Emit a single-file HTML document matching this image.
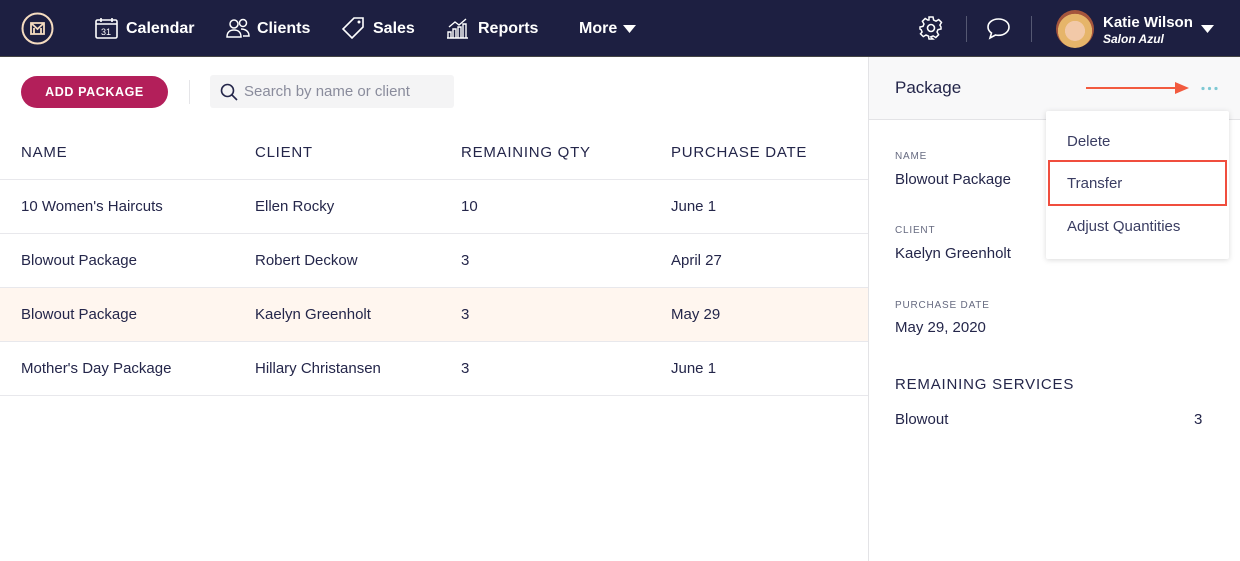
<!DOCTYPE html>
<html><head><meta charset="utf-8"><style>
*{margin:0;padding:0;box-sizing:border-box}
body{width:1240px;height:561px;overflow:hidden;background:#fff;font-family:"Liberation Sans",sans-serif;color:#24264a;position:relative}
.nav{position:absolute;left:0;top:0;width:1240px;height:57px;background:#1d1f41;border-bottom:1px solid #444}
.nav .it{position:absolute;top:20px;color:#fff;font-size:16px;font-weight:bold}
.nav svg{position:absolute}
.abs{position:absolute}
.th{position:absolute;top:144px;font-size:15px;letter-spacing:.75px;color:#24264a}
.row{position:absolute;left:0;width:868px;height:54px;border-top:1px solid #e8e8ec}
.row span{position:absolute;top:18px;font-size:15px}
.lbl{position:absolute;left:895px;font-size:10px;letter-spacing:.8px;color:#666a80}
.val{position:absolute;left:895px;font-size:15px}
</style></head><body>
<div class="nav">
<svg style="left:21px;top:12px" width="33" height="33" viewBox="0 0 33 33"><circle cx="16.5" cy="16.5" r="15" fill="none" stroke="#f5dcc0" stroke-width="2"/><path d="M10 11h13v11H10z M10 11l6.5 6 6.5-6 M13 22v-6 M20 22v-6" fill="none" stroke="#f5dcc0" stroke-width="1.8"/></svg>
<svg style="left:95px;top:18px" width="23" height="21" viewBox="0 0 23 21"><rect x="1" y="2" width="21" height="18" rx="1.5" fill="none" stroke="#fff" stroke-width="1.6"/><path d="M1 6h21M6 0v4M17 0v4" stroke="#fff" stroke-width="1.6"/><text x="6" y="17" font-size="9" fill="#fff" font-family="Liberation Sans">31</text></svg>
<div class="it" style="left:126px">Calendar</div>
<svg style="left:226px;top:18px" width="24" height="20" viewBox="0 0 24 20"><circle cx="8" cy="6" r="4" fill="none" stroke="#fff" stroke-width="1.5"/><circle cx="17" cy="5" r="3.5" fill="none" stroke="#fff" stroke-width="1.5"/><path d="M1 19c0-5 3-7 7-7s7 2 7 7z M15 11c4 0 8 2 8 7h-6" fill="none" stroke="#fff" stroke-width="1.5"/></svg>
<div class="it" style="left:257px">Clients</div>
<svg style="left:341px;top:17px" width="24" height="22" viewBox="0 0 24 22"><path d="M13 1h9v9L11 21 2 12z" fill="none" stroke="#fff" stroke-width="1.6"/><circle cx="18" cy="5" r="1.5" fill="#fff"/></svg>
<div class="it" style="left:373px">Sales</div>
<svg style="left:446px;top:17px" width="23" height="22" viewBox="0 0 23 22"><path d="M2 21v-6h3v6M7 21v-9h3v9M12 21v-11h3v11M17 21v-14h3v14M1 21h21M3 10l6-5 4 3 7-6" fill="none" stroke="#fff" stroke-width="1.4"/></svg>
<div class="it" style="left:478px">Reports</div>
<div class="it" style="left:579px">More</div>
<svg style="left:623px;top:25px" width="13" height="8"><path d="M0 0h13L6.5 8z" fill="#fff"/></svg>
<svg style="left:919px;top:16px" width="24" height="24" viewBox="0 0 24 24"><circle cx="12" cy="12" r="3.5" fill="none" stroke="#fff" stroke-width="1.6"/><path d="M10 1h4l.6 3 2.4 1.2 2.7-1.6 2.8 2.8-1.6 2.7L22 11v2l-3 .6-1 2.4 1.6 2.7-2.8 2.8-2.7-1.6-2.4 1L14 23h-4l-.6-3-2.4-1-2.7 1.6-2.8-2.8L3.1 16l-1-2.4L1 13v-2l3-.6 1-2.4-1.6-2.7 2.8-2.8L8.9 4.1 10 4z" fill="none" stroke="#fff" stroke-width="1.5"/></svg>
<div class="abs" style="left:966px;top:16px;width:1px;height:26px;background:#555872"></div>
<svg style="left:986px;top:17px" width="25" height="23" viewBox="0 0 25 23"><path d="M12.5 2C6.5 2 2 5.5 2 10c0 2.5 1.3 4.5 3.5 6L4 21l5.5-3c1 .2 2 .3 3 .3 6 0 10.5-3.7 10.5-8.3S18.5 2 12.5 2z" fill="none" stroke="#fff" stroke-width="1.6"/></svg>
<div class="abs" style="left:1031px;top:16px;width:1px;height:26px;background:#555872"></div>
<div class="abs" style="left:1056px;top:10px;width:38px;height:38px;border-radius:50%;background:radial-gradient(circle at 50% 55%,#f2c9a8 0 35%,#e6b56a 36% 60%,#a5553c 61%)"></div>
<div class="it" style="left:1103px;top:14px;font-size:15px">Katie Wilson</div>
<div class="abs" style="left:1103px;top:32px;color:#fff;font-size:12px;font-style:italic;font-weight:bold">Salon Azul</div>
<svg style="left:1201px;top:25px" width="13" height="8"><path d="M0 0h13L6.5 8z" fill="#fff"/></svg>
</div>

<div class="abs" style="left:21px;top:76px;width:147px;height:32px;border-radius:16px;background:#b31f5a;color:#fff;font-size:12.5px;font-weight:bold;letter-spacing:.6px;text-align:center;line-height:32px">ADD PACKAGE</div>
<div class="abs" style="left:189px;top:80px;width:1px;height:24px;background:#e5e5e8"></div>
<div class="abs" style="left:210px;top:75px;width:244px;height:33px;background:#f4f4f5;border-radius:3px"></div>
<svg class="abs" style="left:220px;top:83px" width="18" height="18" viewBox="0 0 18 18"><circle cx="7.5" cy="7.5" r="6" fill="none" stroke="#24264a" stroke-width="1.6"/><path d="M12 12l5 5" stroke="#24264a" stroke-width="1.6"/></svg>
<div class="abs" style="left:244px;top:83px;font-size:15px;color:#8a8c9c">Search by name or client</div>

<div class="th" style="left:21px">NAME</div>
<div class="th" style="left:255px">CLIENT</div>
<div class="th" style="left:461px">REMAINING QTY</div>
<div class="th" style="left:671px">PURCHASE DATE</div>
<div class="row" style="top:179px"><span style="left:21px">10 Women's Haircuts</span><span style="left:255px">Ellen Rocky</span><span style="left:461px">10</span><span style="left:671px">June 1</span></div>
<div class="row" style="top:233px"><span style="left:21px">Blowout Package</span><span style="left:255px">Robert Deckow</span><span style="left:461px">3</span><span style="left:671px">April 27</span></div>
<div class="row" style="top:287px;background:#fff6ef"><span style="left:21px">Blowout Package</span><span style="left:255px">Kaelyn Greenholt</span><span style="left:461px">3</span><span style="left:671px">May 29</span></div>
<div class="row" style="top:341px"><span style="left:21px">Mother's Day Package</span><span style="left:255px">Hillary Christansen</span><span style="left:461px">3</span><span style="left:671px">June 1</span></div>
<div class="abs" style="left:0;top:395px;width:868px;height:1px;background:#e8e8ec"></div>

<div class="abs" style="left:868px;top:57px;width:1px;height:504px;background:#e3e3e6"></div>
<div class="abs" style="left:869px;top:57px;width:371px;height:63px;background:#f8f8f9;border-bottom:1px solid #e3e3e6"></div>
<div class="abs" style="left:895px;top:78px;font-size:17px">Package</div>
<div class="abs" style="left:1086px;top:87px;width:95px;height:2px;background:#f25a3f"></div>
<svg class="abs" style="left:1175px;top:82px" width="14" height="12"><path d="M0 0l14 6-14 6z" fill="#f25a3f"/></svg>
<svg class="abs" style="left:1201px;top:86px" width="17" height="5"><circle cx="2" cy="2.5" r="1.6" fill="#7fc9d4"/><circle cx="8.5" cy="2.5" r="1.6" fill="#7fc9d4"/><circle cx="15" cy="2.5" r="1.6" fill="#7fc9d4"/></svg>

<div class="lbl" style="top:151px">NAME</div><div class="val" style="top:171px">Blowout Package</div>
<div class="lbl" style="top:225px">CLIENT</div><div class="val" style="top:245px">Kaelyn Greenholt</div>
<div class="lbl" style="top:300px">PURCHASE DATE</div><div class="val" style="top:319px">May 29, 2020</div>
<div class="abs" style="left:895px;top:376px;font-size:15px;letter-spacing:.8px">REMAINING SERVICES</div>
<div class="val" style="top:411px">Blowout</div>
<div class="abs" style="left:1194px;top:411px;font-size:15px">3</div>

<div class="abs" style="left:1046px;top:111px;width:183px;height:148px;background:#fff;box-shadow:0 1px 6px rgba(0,0,0,.15);border-radius:2px"></div>
<div class="abs" style="left:1067px;top:133px;font-size:15px;color:#3a3d62">Delete</div>
<div class="abs" style="left:1048px;top:160px;width:179px;height:46px;border:2px solid #f04e3e"></div>
<div class="abs" style="left:1067px;top:175px;font-size:15px;color:#3a3d62">Transfer</div>
<div class="abs" style="left:1067px;top:218px;font-size:15px;color:#3a3d62">Adjust Quantities</div>
</body></html>
